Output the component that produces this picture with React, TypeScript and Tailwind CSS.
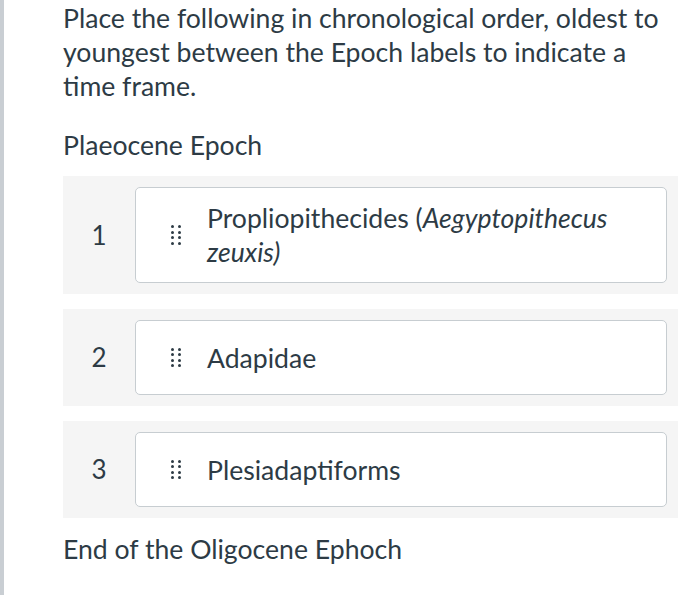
import React from 'react';

const items = [
    { n: 1, label: <>Propliopithecides (<i>Aegyptopithecus zeuxis)</i></> },
    { n: 2, label: <>Adapidae</> },
    { n: 3, label: <>Plesiadaptiforms</> },
];

function Handle() {
    return (
        <div className="grid grid-cols-2 gap-x-[4px] gap-y-[2.5px] w-[10px] shrink-0">
            {Array.from({ length: 8 }).map((_, i) => (
                <span key={i} className="w-[3px] h-[3px] rounded-full bg-[#2d3b45]" />
            ))}
        </div>
    );
}

export default function App() {
    return (
        <div className="w-[700px] h-[595px] bg-white flex text-[#2d3b45]" style={{ fontFamily: 'Lato, "Open Sans", sans-serif' }}>
            <div className="w-[4px] bg-[#c9ced3] shrink-0" />
            <div className="flex-1 pl-[59px] pr-[22px]">
                <p className="text-[26.6px] leading-[34px] pt-[1px]">
                    Place the following in chronological order, oldest to youngest between the Epoch labels to indicate a time frame.
                </p>
                <p className="text-[26.6px] leading-[34px] mt-[25px]">Plaeocene Epoch</p>

                <div className="mt-[14px] flex flex-col gap-[15px]">
                    {items.map((it) => (
                        <div key={it.n} className="bg-[#f5f5f5] flex items-center py-[11px] pr-[11px]">
                            <div className="w-[72px] text-center text-[26px] shrink-0">{it.n}</div>
                            <div className="flex-1 min-h-[75px] bg-white border border-[#c7cdd1] rounded-[5px] flex items-center pl-[35px] pr-[20px] py-[13px] gap-[26px]">
                                <Handle />
                                <div className="text-[26.6px] leading-[34px]">{it.label}</div>
                            </div>
                        </div>
                    ))}
                </div>

                <p className="text-[26.6px] leading-[34px] mt-[14px]">End of the Oligocene Ephoch</p>
            </div>
        </div>
    );
}
